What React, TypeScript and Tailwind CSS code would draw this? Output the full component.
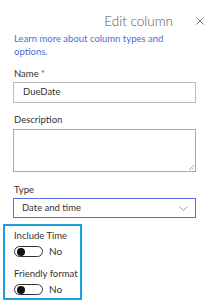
import React from "react";

function Toggle() {
  return (
    <div className="flex items-center gap-[6px] h-[11px]">
      <div className="w-[29px] h-[11px] rounded-full border border-[#333] flex items-center pl-[2px]">
        <div className="w-[8px] h-[8px] rounded-full bg-[#111]" />
      </div>
      <span className="text-[10px] leading-[13px] text-[#333]">No</span>
    </div>
  );
}

export default function App() {
  return (
    <div
      className="w-[209px] h-[300px] bg-white overflow-hidden flex flex-col"
      style={{ fontFamily: 'Lato, "Noto Sans", sans-serif' }}
    >
      <div className="flex items-center justify-end h-[20px] mt-[11px] pr-[5px]">
        <span className="text-[13.5px] font-light text-[#555] leading-[20px]">Edit column</span>
        <svg className="ml-[23px] w-[8px] h-[8px]" viewBox="0 0 8 8">
          <path d="M0.5 0.5 L7.5 7.5 M7.5 0.5 L0.5 7.5" stroke="#666" strokeWidth="0.9" fill="none" />
        </svg>
      </div>
      <div className="px-[13px] flex flex-col">
        <div className="mt-[1px] text-[9.5px] leading-[13px] text-[#4a6ee0] pl-[1px] pr-[30px]">
          Learn more about column types and options.
        </div>
        <div className="mt-[9px] text-[9.5px] leading-[13px] text-[#333] pl-[1px]">
          Name <span className="text-[#c4314b]">*</span>
        </div>
        <div className="mt-[2px] h-[21px] border border-[#bbb] flex items-center pl-[9px] text-[9.5px] text-[#333]">
          DueDate
        </div>
        <div className="mt-[10px] text-[9.5px] leading-[13px] text-[#333] pl-[1px]">Description</div>
        <div className="mt-[3px] h-[43px] border border-[#aaa] relative">
          <svg className="absolute right-[1px] bottom-[1px] w-[6px] h-[6px]" viewBox="0 0 6 6">
            <path d="M6 1 L1 6 M6 3.5 L3.5 6" stroke="#999" strokeWidth="0.8" />
          </svg>
        </div>
        <div className="mt-[11px] text-[9.5px] leading-[13px] text-[#333] pl-[1px]">Type</div>
        <div className="mt-[2px] h-[20px] border-[1.5px] border-[#5a6fe6] flex items-center justify-between pl-[8px] pr-[7px] text-[9.5px] text-[#333]">
          <span>Date and time</span>
          <svg className="w-[9px] h-[5px]" viewBox="0 0 9 5">
            <path d="M0.5 0.5 L4.5 4.5 L8.5 0.5" stroke="#888" strokeWidth="0.8" fill="none" />
          </svg>
        </div>
      </div>
      <div className="mt-[6px] ml-[3px] w-[79px] h-[76px] border-2 border-[#1ba1e2] pl-[9px] pt-[3px] flex flex-col">
        <div className="text-[9.5px] leading-[13px] text-[#333] whitespace-nowrap">Include Time</div>
        <div className="mt-[4px]"><Toggle /></div>
        <div className="mt-[10px] text-[9.5px] leading-[13px] text-[#333] whitespace-nowrap">Friendly format</div>
        <div className="mt-[4px]"><Toggle /></div>
      </div>
    </div>
  );
}
